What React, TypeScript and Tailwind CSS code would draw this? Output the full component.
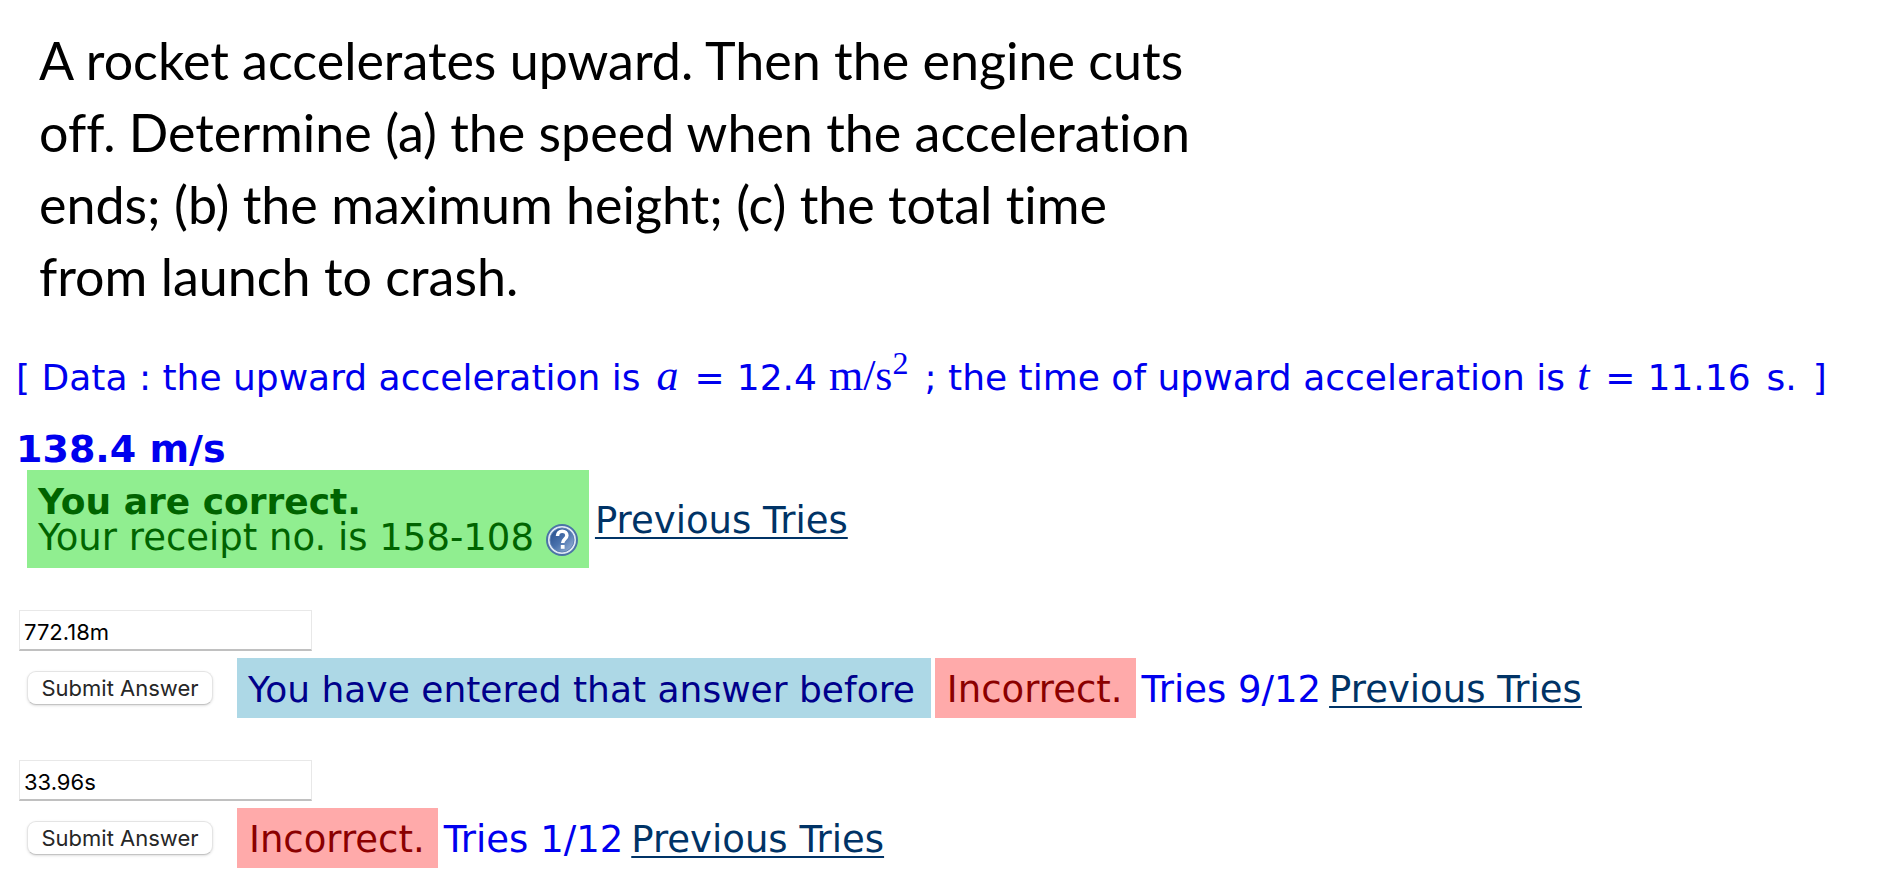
import React, { useState } from 'react';

const problemLines = [
  'A rocket accelerates upward. Then the engine cuts',
  'off. Determine (a) the speed when the acceleration',
  'ends; (b) the maximum height; (c) the total time',
  'from launch to crash.',
];

const PreviousTries = () => (
  <a
    href="#tries"
    className="pt-[3px] text-[37px] text-[#003366] underline decoration-2 underline-offset-4"
  >
    Previous Tries
  </a>
);

const MathVar = ({ children }: { children: React.ReactNode }) => (
  <i className="font-['Liberation_Serif',serif] text-[44px] leading-none">{children}</i>
);

const HelpIcon = () => (
  <svg viewBox="0 0 32 32" className="h-8 w-8" aria-hidden="true">
    <defs>
      <linearGradient id="help-fill" x1="0" y1="0" x2="1" y2="1">
        <stop offset="0" stopColor="#244a88" />
        <stop offset="0.5" stopColor="#4a72ad" />
        <stop offset="1" stopColor="#a3bbdc" />
      </linearGradient>
    </defs>
    <circle cx="16" cy="16" r="15" fill="#dfe8f4" stroke="#4b73a6" strokeWidth="2" />
    <circle cx="16" cy="16" r="12" fill="url(#help-fill)" stroke="#5f82b5" strokeWidth="1" />
    <path
      d="M11.500 12c0-3 2-4.800 4.700-4.800s4.700 1.600 4.700 4.200c0 3.500-4.200 3.800-4.200 7.600"
      fill="none"
      stroke="#fff"
      strokeWidth="3.500"
    />
    <rect x="14.800" y="21" width="3.800" height="3.800" fill="#fff" />
  </svg>
);

type AnswerProps = {
  id: string;
  initial: string;
  tries: string;
  repeated?: boolean;
};

const Answer = ({ id, initial, tries, repeated }: AnswerProps) => {
  const [value, setValue] = useState(initial);

  return (
    <form className="mt-[42px]" onSubmit={(e) => e.preventDefault()}>
      <input
        id={id}
        type="text"
        aria-label="Answer"
        value={value}
        onChange={(e) => setValue(e.target.value)}
        className="ml-[19px] block h-[41px] w-[293px] border border-b-2 border-[#e8e8e8] border-b-[#c0c0c0] bg-white px-1 pt-1 font-['Inter',sans-serif] text-[22px] text-black"
      />
      <div className="mt-[7px] flex items-center whitespace-nowrap">
        <button
          type="submit"
          className="mr-6 ml-[27px] h-[34px] w-[186px] rounded-[9px] border border-[#e4e4e4] border-b-[#c4c4c4] bg-white font-['Inter',sans-serif] text-[22px] leading-none text-[#262626] shadow-sm"
        >
          Submit Answer
        </button>
        {repeated && (
          <span className="mr-1 bg-[#add8e6] pt-[14px] pr-4 pb-[10px] pl-[11px] text-[#00008b]">
            You have entered that answer before
          </span>
        )}
        <span className="mr-1.5 bg-[#ffaaaa] pt-[14px] pr-[13px] pb-[10px] pl-3 text-[37px] text-[#8b0000]">
          Incorrect.
        </span>
        <span className="mr-2 pt-[3px] text-[37px]">Tries {tries}</span>
        <PreviousTries />
      </div>
    </form>
  );
};

export default function App() {
  return (
    <main className="bg-white font-['DejaVu_Sans',Verdana,sans-serif] text-[36px] leading-[36px] text-[#0000ee]">
      <p className="pt-6 pl-[39px] font-['Lato',sans-serif] text-[52px] leading-[72px] text-black [font-variant-ligatures:none]">
        {problemLines.map((line) => (
          <span key={line} className="block">
            {line}
          </span>
        ))}
      </p>

      <p className="mt-[42px] ml-4 flex h-[40px] items-baseline whitespace-nowrap">
        <span className="mr-4">[ Data : the upward acceleration is</span>
        <MathVar>a</MathVar>
        <span className="mr-3 ml-4">=</span>
        <span className="mr-3">12.4</span>
        <span className="font-['Liberation_Serif',serif] text-[44px] leading-none">
          m/s<sup className="text-[32px]">2</sup>
        </span>
        <span className="mr-3 ml-4">; the time of upward acceleration is</span>
        <MathVar>t</MathVar>
        <span className="mr-3 ml-4">=</span>
        <span>11.16</span>
        <span className="mx-4">s.</span>
        <span>]</span>
      </p>

      <p className="mt-[35px] mb-px ml-4 text-[38px] leading-[40px] font-bold">138.4 m/s</p>
      <div className="ml-[27px] flex items-center gap-1.5 whitespace-nowrap">
        <div className="bg-[#90ee90] pt-[14px] pr-[11px] pb-3 pl-[11px] text-[#006400]">
          <b className="block">You are correct.</b>
          <div className="flex h-9 items-center gap-3 text-[37px]">
            Your receipt no. is 158-108
            <a href="#receipt" aria-label="About receipts" className="pt-1">
              <HelpIcon />
            </a>
          </div>
        </div>
        <PreviousTries />
      </div>

      <Answer id="height" initial="772.18m" tries="9/12" repeated />
      <Answer id="time" initial="33.96s" tries="1/12" />
    </main>
  );
}
